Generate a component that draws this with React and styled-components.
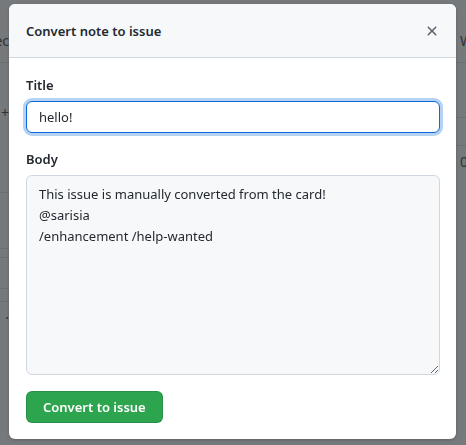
import React from "react";
import styled, { createGlobalStyle } from "styled-components";

const Global = createGlobalStyle`
  html, body { margin: 0; padding: 0; height: 100%; }
  body {
    background: #76797c;
    font-family: "Noto Sans", "Liberation Sans", sans-serif;
    color: #24292f;
    overflow: hidden;
  }
  #root { height: 100%; }
`;

const Page = styled.div`
  height: 445px;
  display: flex;
  justify-content: space-between;
  background: #76797c;
`;

const Strip = styled.div`
  width: ${(p) => p.$w}px;
  display: flex;
  flex-direction: column;
  overflow: hidden;
  font-size: 14px;
  color: #2e3236;
`;

const StripRow = styled.div`
  width: 100%;
  height: ${(p) => p.$h}px;
  box-sizing: border-box;
  border-bottom: ${(p) => (p.$line ? "1px solid #6c6f72" : "none")};
  display: flex;
  align-items: center;
  justify-content: ${(p) => (p.$right ? "flex-start" : "flex-end")};
  white-space: nowrap;
  padding: ${(p) => (p.$right ? "0 0 0 4px" : "0")};
`;

const Overlay = styled.div`
  position: fixed;
  inset: 0;
  display: flex;
  align-items: flex-start;
  justify-content: flex-start;
  padding: 4px 0 0 9px;
`;

const Dialog = styled.div`
  width: 447px;
  background: #ffffff;
  border-radius: 6px;
  box-shadow: 0 1px 3px rgba(0, 0, 0, 0.2);
  overflow: hidden;
  display: flex;
  flex-direction: column;
`;

const Header = styled.div`
  height: 53px;
  background: #f6f8fa;
  border-bottom: 1px solid #d0d7de;
  display: flex;
  align-items: center;
  justify-content: space-between;
  padding: 0 16px 0 17px;
`;

const Heading = styled.h2`
  margin: 0;
  font-size: 13px;
  font-weight: 600;
  line-height: 20px;
  color: #24292f;
`;

const CloseButton = styled.button`
  border: 0;
  background: transparent;
  padding: 0;
  width: 16px;
  height: 16px;
  display: flex;
  align-items: center;
  justify-content: center;
  color: #57606a;
  cursor: pointer;
`;

const Body = styled.form`
  display: flex;
  flex-direction: column;
  padding: 17px 16px 16px 17px;
`;

const Field = styled.div`
  display: flex;
  flex-direction: column;
  gap: 6px;
  margin-bottom: 16px;
`;

const Label = styled.label`
  font-size: 13px;
  font-weight: 600;
  line-height: 20px;
  color: #24292f;
`;

const Input = styled.input`
  box-sizing: border-box;
  height: 32px;
  width: 100%;
  padding: 0 12px;
  font: inherit;
  font-size: 13px;
  color: #24292f;
  background: #ffffff;
  border: 1px solid #0969da;
  border-radius: 6px;
  outline: none;
  box-shadow: 0 0 0 3px rgba(9, 105, 218, 0.3);
`;

const TextArea = styled.textarea`
  box-sizing: border-box;
  width: 100%;
  height: 200px;
  padding: 8px 12px;
  font: inherit;
  font-size: 13px;
  line-height: 21px;
  color: #24292f;
  background: #f6f8fa;
  border: 1px solid #d0d7de;
  border-radius: 6px;
  outline: none;
  resize: vertical;
`;

const Submit = styled.button`
  align-self: flex-start;
  height: 32px;
  padding: 0 16px;
  font: inherit;
  font-size: 13px;
  font-weight: 600;
  color: #ffffff;
  background: #2da44e;
  border: 1px solid rgba(27, 31, 36, 0.15);
  border-radius: 6px;
  cursor: pointer;
`;

const XIcon = () => (
  <svg width="16" height="16" viewBox="0 0 16 16" fill="currentColor" aria-hidden="true">
    <path d="M3.72 3.72a.75.75 0 0 1 1.06 0L8 6.94l3.22-3.22a.749.749 0 0 1 1.275.326.749.749 0 0 1-.215.734L9.06 8l3.22 3.22a.749.749 0 0 1-.326 1.275.749.749 0 0 1-.734-.215L8 9.06l-3.22 3.22a.751.751 0 0 1-1.042-.018.751.751 0 0 1-.018-1.042L6.94 8 3.72 4.78a.75.75 0 0 1 0-1.06Z" />
  </svg>
);

const leftRows = [
  { h: 28 },
  { h: 24, t: "ec" },
  { h: 11, line: true },
  { h: 98, t: "+" },
  { h: 32, line: true },
  { h: 56, line: true },
  { h: 9, line: true },
  { h: 31, line: true },
  { h: 13, line: true },
  { h: 30, t: "·" },
];

const rightRows = [
  { h: 28 },
  { h: 24, t: "W" },
  { h: 11, line: true },
  { h: 55, line: true },
  { h: 28, line: true },
  { h: 30, t: "0" },
];

export default function App() {
  return (
    <>
      <Global />
      <Page>
        <Strip $w={9}>
          {leftRows.map((r, i) => (
            <StripRow key={i} $h={r.h} $line={r.line}>
              {r.t}
            </StripRow>
          ))}
        </Strip>
        <Strip $w={10}>
          {rightRows.map((r, i) => (
            <StripRow key={i} $h={r.h} $line={r.line} $right>
              {r.t}
            </StripRow>
          ))}
        </Strip>
      </Page>
      <Overlay>
        <Dialog role="dialog" aria-label="Convert note to issue">
          <Header>
            <Heading>Convert note to issue</Heading>
            <CloseButton type="button" aria-label="Close">
              <XIcon />
            </CloseButton>
          </Header>
          <Body onSubmit={(e) => e.preventDefault()}>
            <Field>
              <Label htmlFor="title">Title</Label>
              <Input id="title" defaultValue="hello!" />
            </Field>
            <Field>
              <Label htmlFor="body">Body</Label>
              <TextArea
                id="body"
                defaultValue={"This issue is manually converted from the card!\n@sarisia\n/enhancement /help-wanted"}
              />
            </Field>
            <Submit type="submit">Convert to issue</Submit>
          </Body>
        </Dialog>
      </Overlay>
    </>
  );
}
